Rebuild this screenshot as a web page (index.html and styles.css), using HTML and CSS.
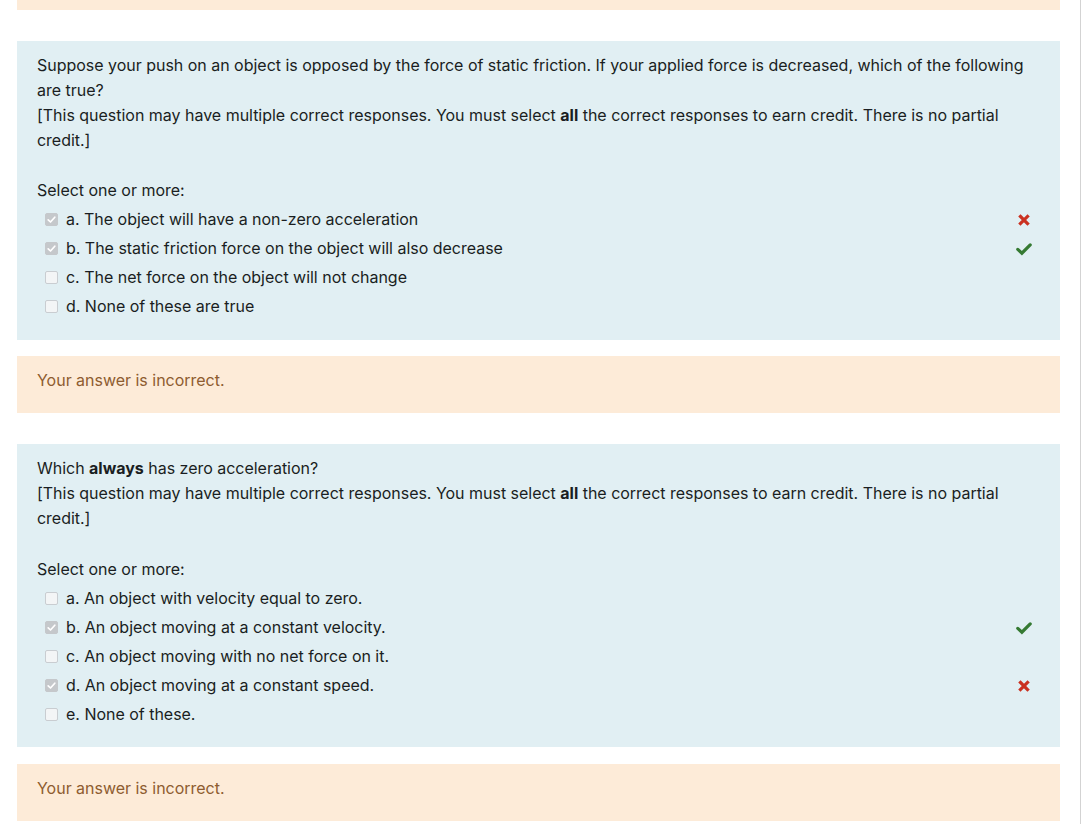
FILE: index.html
```html
<!DOCTYPE html>
<html lang="en">
<head>
<meta charset="utf-8">
<title>Quiz review</title>
<link rel="stylesheet" href="styles.css">
</head>
<body>
<div class="page">
  <div class="outcome-tail"></div>

  <div class="formulation first">
    <div class="qtext">
      <p>Suppose your push on an object is opposed by the force of static friction. If your applied force is decreased, which of the following are true?</p>
      <p>[This question may have multiple correct responses. You must select <strong>all</strong> the correct responses to earn credit. There is no partial credit.]</p>
    </div>
    <div class="prompt">Select one or more:</div>
    <div class="answers">
      <div class="opt"><span class="cb checked"><svg viewBox="0 0 13 13"><path d="M3.2 6.8 L5.5 9 L9.8 4.2" /></svg></span><span class="label">a. The object will have a non-zero acceleration</span><span class="mark"><svg class="x" viewBox="0 0 16 16"><path d="M3.6 3.6 L12.4 12.4 M12.4 3.6 L3.6 12.4"/></svg></span></div>
      <div class="opt"><span class="cb checked"><svg viewBox="0 0 13 13"><path d="M3.2 6.8 L5.5 9 L9.8 4.2" /></svg></span><span class="label">b. The static friction force on the object will also decrease</span><span class="mark"><svg class="ok" viewBox="0 0 16 16"><path d="M1.8 8.4 L5.9 12.2 L14.2 3.9"/></svg></span></div>
      <div class="opt"><span class="cb"></span><span class="label">c. The net force on the object will not change</span></div>
      <div class="opt"><span class="cb"></span><span class="label">d. None of these are true</span></div>
    </div>
  </div>
  <div class="outcome">Your answer is incorrect.</div>

  <div class="formulation second">
    <div class="qtext">
      <p>Which <strong>always</strong> has zero acceleration?</p>
      <p>[This question may have multiple correct responses. You must select <strong>all</strong> the correct responses to earn credit. There is no partial credit.]</p>
    </div>
    <div class="prompt">Select one or more:</div>
    <div class="answers">
      <div class="opt"><span class="cb"></span><span class="label">a. An object with velocity equal to zero.</span></div>
      <div class="opt"><span class="cb checked"><svg viewBox="0 0 13 13"><path d="M3.2 6.8 L5.5 9 L9.8 4.2" /></svg></span><span class="label">b. An object moving at a constant velocity.</span><span class="mark"><svg class="ok" viewBox="0 0 16 16"><path d="M1.8 8.4 L5.9 12.2 L14.2 3.9"/></svg></span></div>
      <div class="opt"><span class="cb"></span><span class="label">c. An object moving with no net force on it.</span></div>
      <div class="opt"><span class="cb checked"><svg viewBox="0 0 13 13"><path d="M3.2 6.8 L5.5 9 L9.8 4.2" /></svg></span><span class="label">d. An object moving at a constant speed.</span><span class="mark"><svg class="x" viewBox="0 0 16 16"><path d="M3.6 3.6 L12.4 12.4 M12.4 3.6 L3.6 12.4"/></svg></span></div>
      <div class="opt"><span class="cb"></span><span class="label">e. None of these.</span></div>
    </div>
  </div>
  <div class="outcome">Your answer is incorrect.</div>
</div>
</body>
</html>
```

FILE: styles.css
```css
html, body {
  margin: 0;
  padding: 0;
  background: #fff;
}
body {
  font-family: Inter, "Noto Sans", "Liberation Sans", sans-serif;
  font-size: 16px;
  line-height: 25px;
  color: #1a1e22;
  letter-spacing: -0.02px;
  overflow: hidden;
}
.page {
  width: 1043px;
  min-height: 824px;
  padding: 0 20px 0 17px;
  border-right: 1px solid #d3d3d3;
}
.outcome-tail {
  height: 10px;
  background: #fdebd8;
}
.formulation {
  background: #e1eff3;
  padding: 12px 20px 19px 20px;
  margin-top: 31px;
}
.qtext p {
  margin: 0;
}
.prompt {
  margin-top: 25px;
}
.second {
  padding-bottom: 18px;
}
.second .prompt {
  margin-top: 26px;
}
.answers {
  margin-top: 2px;
}
.opt {
  display: flex;
  align-items: center;
  height: 29px;
  padding-left: 8px;
}
.cb {
  width: 13px;
  height: 13px;
  box-sizing: border-box;
  border: 1px solid #c9cdd1;
  border-radius: 2px;
  background: #f3f5f6;
  margin-right: 8px;
  flex: none;
  display: flex;
}
.cb.checked {
  background: #c5c8cb;
  border-color: #c5c8cb;
}
.cb svg {
  width: 13px;
  height: 13px;
  margin: -1px;
}
.cb svg path {
  fill: none;
  stroke: #fff;
  stroke-width: 1.7;
  stroke-linecap: round;
  stroke-linejoin: round;
}
.label {
  flex: 1;
}
.mark {
  width: 16px;
  height: 16px;
  margin-right: 8px;
  display: flex;
}
.mark svg {
  width: 16px;
  height: 16px;
}
.mark .x path {
  fill: none;
  stroke: #ca3120;
  stroke-width: 4;
  stroke-linecap: square;
  transform: scale(0.8);
  transform-origin: 8px 8px;
}
.mark .ok path {
  fill: none;
  stroke: #357a32;
  stroke-width: 3.2;
  stroke-linejoin: miter;
  stroke-linecap: round;
}
.outcome {
  background: #fdebd8;
  color: #8e5c30;
  padding: 12px 20px 20px 20px;
  margin-top: 16px;
}
.second + .outcome {
  margin-top: 17px;
}
```
